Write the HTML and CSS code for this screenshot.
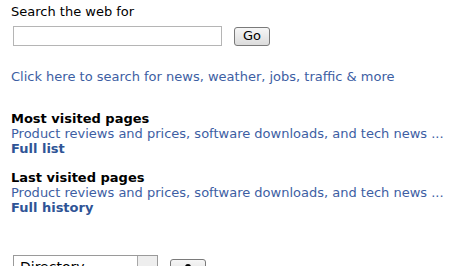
FILE: index.html
```html
<!DOCTYPE html>
<html>
<head>
<meta charset="utf-8">
<link rel="stylesheet" href="styles.css">
</head>
<body>
<div class="page">
  <form class="search">
    <label class="label" for="q">Search the web for</label>
    <div class="row">
      <input id="q" class="text" type="text">
      <button class="btn" type="button">Go</button>
    </div>
  </form>
  <a class="link more" href="#">Click here to search for news, weather, jobs, traffic &amp; more</a>
  <section class="block">
    <div class="title">Most visited pages</div>
    <a class="link" href="#">Product reviews and prices, software downloads, and tech news ...</a>
    <a class="link strong" href="#">Full list</a>
  </section>
  <section class="block">
    <div class="title">Last visited pages</div>
    <a class="link" href="#">Product reviews and prices, software downloads, and tech news ...</a>
    <a class="link strong" href="#">Full history</a>
  </section>
  <div class="row bottom">
    <div class="select"><span class="sel-text">Directory</span><span class="sel-arrow"><span class="dash"></span></span></div>
    <button class="btn small" type="button"><span class="dot"></span></button>
  </div>
</div>
</body>
</html>
```
FILE: styles.css
```css
html, body { margin: 0; padding: 0; background: #fff; }
body { font-family: "DejaVu Sans", Verdana, sans-serif; font-size: 13px; color: #000; overflow: hidden; height: 266px; }
.page { padding: 4px 0 0 11px; display: flex; flex-direction: column; align-items: flex-start; }
.search { display: flex; flex-direction: column; }
.label { font-size: 13px; line-height: 16px; }
.row { display: flex; align-items: center; gap: 12px; margin-top: 6px; margin-left: 2px; }
.text { width: 205px; height: 16px; border: 1px solid #b5b5b5; padding: 1px; margin: 0; box-sizing: content-box; }
.btn { font-family: "DejaVu Sans", Verdana, sans-serif; font-size: 13px; height: 19px; padding: 0 8px; border: 1px solid #7a7a7a; border-radius: 3px; background: linear-gradient(#f6f6f6, #dcdcdc); color: #000; line-height: 16px; }
.link { color: #3d5ea3; text-decoration: none; line-height: 15px; font-size: 13px; }
.more { margin-top: 23px; }
.block { display: flex; flex-direction: column; margin-top: 27px; }
.block + .block { margin-top: 14px; }
.title { font-weight: bold; font-size: 13px; line-height: 15px; }
.strong { font-weight: bold; color: #2f5496; }
.bottom { margin-top: 40px; gap: 12px; align-items: flex-start; }
.select { width: 143px; height: 22px; border: 1px solid #9a9a9a; display: flex; font-size: 14px; }
.sel-text { flex: 1; padding: 3px 4px 0 6px; line-height: 16px; }
.sel-arrow { width: 19px; border-left: 1px solid #a8a8a8; background: #eee; display: flex; justify-content: center; padding-top: 10px; }
.dash { width: 7px; height: 1px; background: #bbb; }
.small { width: 36px; height: 20px; margin-top: 4px; padding: 0; display: flex; justify-content: center; }
.dot { width: 6px; height: 4px; background: #000; border-radius: 3px 3px 0 0; margin-top: 4px; }
```
